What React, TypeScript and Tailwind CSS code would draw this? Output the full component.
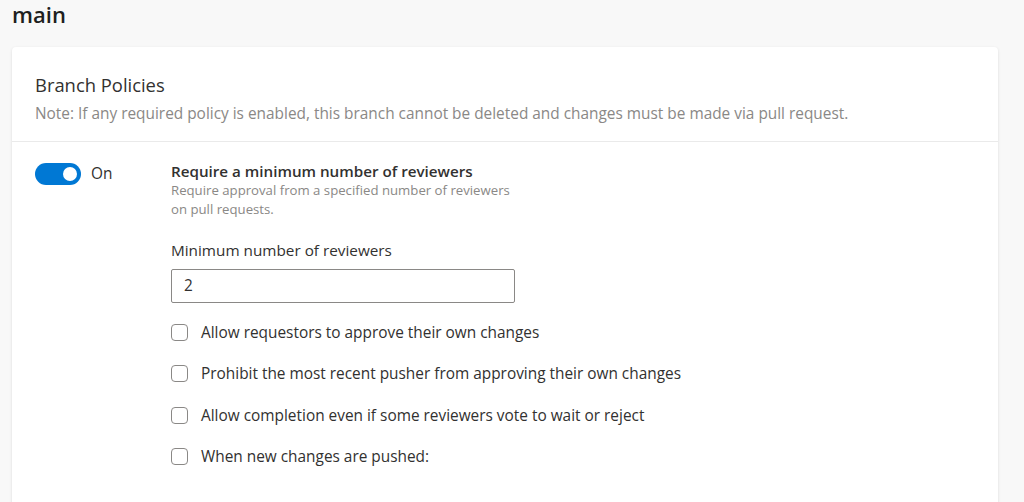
import React from "react";

const font = { fontFamily: '"Segoe UI", "Open Sans", "Noto Sans", sans-serif' };

function Check({ label }: { label: string }) {
  return (
    <div className="flex items-center h-[41.3px]">
      <div className="w-[17px] h-[17px] rounded-[4px] border border-[#8a8886] bg-white shrink-0" />
      <span className="ml-[13px] text-[15.4px] text-[#323130]">{label}</span>
    </div>
  );
}

export default function App() {
  return (
    <div className="w-[1024px] h-[502px] bg-[#f8f8f8] overflow-hidden" style={font}>
      <div className="px-[12px] pt-[0px] h-[47px]">
        <h1 className="text-[22px] font-semibold text-[#201f1e] leading-[28px]">main</h1>
      </div>
      <div className="ml-[12px] w-[986px] bg-white rounded-[4px] shadow-[0_1px_3px_rgba(0,0,0,0.12)] h-[470px]">
        <div className="px-[23px] pt-[26px] pb-[16px] border-b border-[#eaeaea]">
          <div className="text-[18.4px] text-[#323130] leading-[24px]">Branch Policies</div>
          <div className="text-[15.4px] text-[#8a8886] leading-[22px] mt-[6px]">
            Note: If any required policy is enabled, this branch cannot be deleted and changes must be made via pull request.
          </div>
        </div>
        <div className="flex px-[23px] pt-[19px]">
          <div className="w-[136px] flex items-start shrink-0">
            <div className="w-[46px] h-[22px] rounded-full bg-[#0078d4] flex items-center justify-end pr-[4px] mt-[2px]">
              <div className="w-[14px] h-[14px] rounded-full bg-white" />
            </div>
            <span className="ml-[10px] text-[15.4px] text-[#323130] leading-[26px]">On</span>
          </div>
          <div className="flex flex-col">
            <div className="text-[15.2px] font-semibold text-[#323130] leading-[20px]">
              Require a minimum number of reviewers
            </div>
            <div className="text-[13.2px] text-[#8a8886] leading-[19px] w-[342px]">
              Require approval from a specified number of reviewers on pull requests.
            </div>
            <div className="mt-[20px] text-[15.3px] text-[#323130] leading-[22px]">Minimum number of reviewers</div>
            <div className="mt-[8px] w-[344px] h-[34px] border border-[#8a8886] rounded-[2px] flex items-center px-[12px] text-[15.4px] text-[#323130]">
              2
            </div>
            <div className="mt-[9px] flex flex-col">
              <Check label="Allow requestors to approve their own changes" />
              <Check label="Prohibit the most recent pusher from approving their own changes" />
              <Check label="Allow completion even if some reviewers vote to wait or reject" />
              <Check label="When new changes are pushed:" />
            </div>
          </div>
        </div>
      </div>
    </div>
  );
}
